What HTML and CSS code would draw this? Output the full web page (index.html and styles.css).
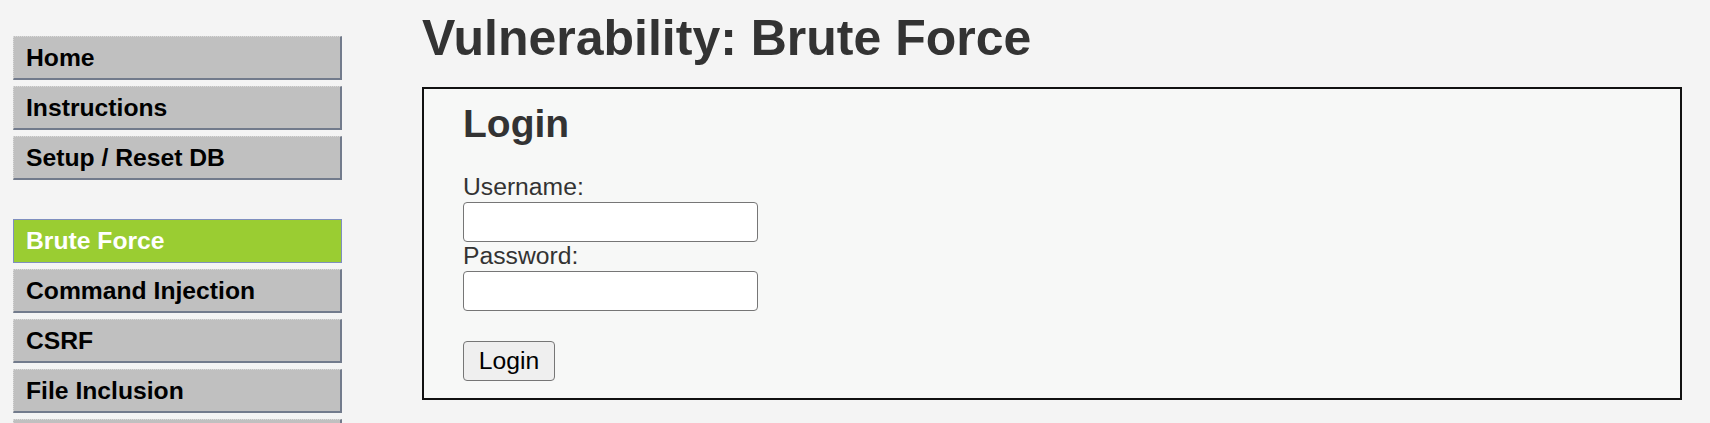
FILE: index.html
```html
<!DOCTYPE html>
<html lang="en">
<head>
<meta charset="utf-8">
<title>Vulnerability: Brute Force</title>
<link rel="stylesheet" href="styles.css">
</head>
<body>
<div class="page">
  <nav class="sidebar">
    <div class="menu-group">
      <a class="menu-item" href="#">Home</a>
      <a class="menu-item" href="#">Instructions</a>
      <a class="menu-item" href="#">Setup / Reset DB</a>
    </div>
    <div class="menu-group">
      <a class="menu-item active" href="#">Brute Force</a>
      <a class="menu-item" href="#">Command Injection</a>
      <a class="menu-item" href="#">CSRF</a>
      <a class="menu-item" href="#">File Inclusion</a>
      <a class="menu-item" href="#" aria-label="File Upload"></a>
    </div>
  </nav>
  <main class="main">
    <h1 class="title">Vulnerability: Brute Force</h1>
    <div class="vuln-box">
      <form class="login-form" action="#" method="get">
        <h2 class="form-title">Login</h2>
        <label class="field-label first" for="username">Username:</label>
        <input class="text-input" type="text" id="username" name="username">
        <label class="field-label" for="password">Password:</label>
        <input class="text-input" type="password" id="password" name="password">
        <button class="submit-btn" type="button">Login</button>
      </form>
    </div>
  </main>
</div>
</body>
</html>
```
FILE: styles.css
```css
html, body {
  margin: 0;
  padding: 0;
  background: #f4f4f4;
  font-family: "Liberation Sans", Arial, sans-serif;
  color: #333;
}

.page {
  display: flex;
  gap: 80px;
  padding: 0 28px 0 13px;
  height: 423px;
  overflow: hidden;
}

.sidebar {
  width: 329px;
  flex: none;
  padding-top: 36px;
}

.menu-group {
  display: flex;
  flex-direction: column;
  gap: 6px;
}

.menu-group + .menu-group {
  margin-top: 39px;
}

.menu-item {
  box-sizing: border-box;
  display: flex;
  align-items: center;
  height: 44px;
  padding-left: 12px;
  background: #c0c0c0;
  border-top: 1px dotted #d9d9d9;
  border-left: 1px dotted #d9d9d9;
  border-right: 2px solid #727b8c;
  border-bottom: 2px solid #727b8c;
  color: #000;
  text-decoration: none;
  font-size: 24.7px;
  font-weight: bold;
  flex: none;
}

.menu-item.active {
  background: #9acd32;
  color: #fff;
  border: 1px solid #7f8fbf;
}

.main {
  flex: 1;
  min-width: 0;
}

.title {
  margin: 0;
  padding-top: 10px;
  font-size: 50px;
  line-height: 57px;
  font-weight: bold;
  color: #333;
}

.vuln-box {
  margin-top: 20px;
  border: 2px solid #111;
  background: #f7f8f7;
  padding: 12px 20px 17px 39px;
}

.login-form {
  display: flex;
  flex-direction: column;
  align-items: flex-start;
}

.form-title {
  margin: 0;
  font-size: 39px;
  line-height: 45px;
  font-weight: bold;
  color: #333;
}

.field-label {
  font-size: 24.7px;
  line-height: 28px;
  color: #333;
}

.field-label.first {
  margin-top: 27px;
}

.text-input {
  box-sizing: border-box;
  display: block;
  width: 295px;
  height: 40px;
  margin: 1px 0 0 0;
  background: #fff;
  border: 1px solid #767676;
  border-radius: 4px;
  font-size: 20px;
}

.submit-btn {
  box-sizing: border-box;
  margin-top: 30px;
  width: 92px;
  height: 40px;
  padding: 0;
  background: #efefef;
  border: 1px solid #767676;
  border-radius: 4px;
  font-family: "Liberation Sans", Arial, sans-serif;
  font-size: 24.7px;
  color: #000;
}
```
